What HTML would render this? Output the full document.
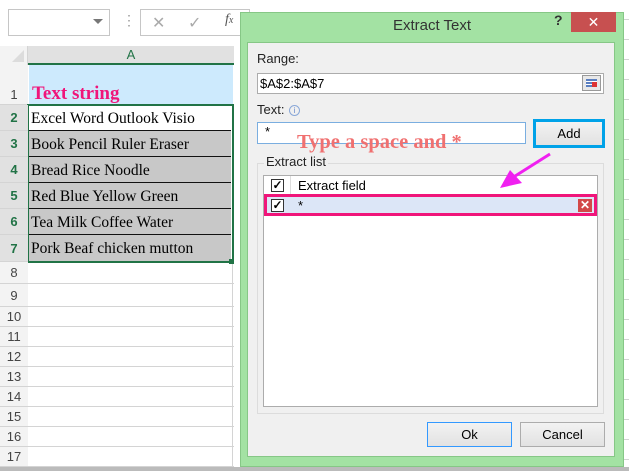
<!DOCTYPE html>
<html><head><style>
body{margin:0;width:629px;height:471px;overflow:hidden;background:#fff;position:relative;font-family:"Liberation Sans",sans-serif}
.a{position:absolute;box-sizing:border-box}
.serif{font-family:"Liberation Serif",serif}
.rn{position:absolute;left:0;width:28px;text-align:center;font-size:13px;color:#444;border-bottom:1px solid #d4d4d4;background:#f3f3f3;box-sizing:border-box}
.gl{position:absolute;left:28px;width:206px;border-bottom:1px solid #d4d4d4;box-sizing:border-box}
.cell{position:absolute;left:29px;width:202px;box-sizing:border-box;background:#c8c8c8;border-bottom:1.5px solid #111;font-family:"Liberation Serif",serif;font-size:15.5px;padding-left:2px;line-height:27px}
.btn{position:absolute;background:linear-gradient(#f2f2f2,#e2e2e2);border:1px solid #acacac;text-align:center;font-size:13px;box-sizing:border-box}
.cb{position:absolute;width:13px;height:13px;border:1px solid #333;background:#fff;box-sizing:border-box;font-size:12px;line-height:11px;text-align:center;font-weight:bold}
</style></head><body>
<div class="a" style="left:8px;top:9px;width:102px;height:27px;border:1px solid #c6c6c6"></div>
<div class="a" style="left:93px;top:19px;width:0;height:0;border-left:5px solid transparent;border-right:5px solid transparent;border-top:5px solid #777"></div>
<div class="a" style="left:122px;top:12px;color:#999;font-size:14px">⋮</div>
<div class="a" style="left:140px;top:9px;width:110px;height:27px;border:1px solid #c6c6c6"></div>
<div class="a" style="left:152px;top:13px;color:#aaa;font-size:16px">✕</div>
<div class="a" style="left:188px;top:13px;color:#aaa;font-size:16px">✓</div>
<div class="a serif" style="left:225px;top:12px;color:#555;font-size:14px;font-style:italic">f<span style="font-size:10px">x</span></div>
<div class="a" style="left:0;top:46px;width:28px;height:19px;background:#f3f3f3;border-right:1px solid #d4d4d4"></div>
<div class="a" style="left:12px;top:50px;width:0;height:0;border-left:12px solid transparent;border-bottom:12px solid #dcdcdc"></div>
<div class="a" style="left:28px;top:46px;width:206px;height:19px;background:#e1e1e1;border-bottom:2px solid #217346;text-align:center;font-size:13px;color:#217346;line-height:18px">A</div>
<div class="a" style="left:0;top:65px;width:28px;height:405px;background:#f3f3f3;border-right:1px solid #d4d4d4"></div>
<div class="a" style="left:232px;top:65px;width:1px;height:405px;background:#d4d4d4"></div>
<div class="a" style="left:29px;top:65px;width:204px;height:40px;background:#cdeafd"></div>
<div class="a serif" style="left:32px;top:83px;color:#f0157a;font-size:19px;font-weight:bold">Text string</div>
<div class="rn" style="top:65px;height:40px;padding-top:22px">1</div>
<div class="cell" style="top:105px;height:26px;background:#fff">Excel Word Outlook Visio</div>
<div class="cell" style="top:131px;height:26px">Book Pencil Ruler Eraser</div>
<div class="cell" style="top:157px;height:26px">Bread Rice Noodle</div>
<div class="cell" style="top:183px;height:26px">Red Blue Yellow Green</div>
<div class="cell" style="top:209px;height:26px">Tea Milk Coffee Water</div>
<div class="cell" style="top:235px;height:26px;border-bottom:none">Pork Beaf chicken mutton</div>
<div class="a" style="left:27px;top:104px;width:207px;height:159px;border:2px solid #217346"></div>
<div class="a" style="left:229px;top:259px;width:5px;height:5px;background:#217346"></div>
<div class="rn" style="top:105px;height:26px;line-height:26px;color:#217346;font-weight:bold;background:#e1e1e1">2</div>
<div class="rn" style="top:131px;height:26px;line-height:26px;color:#217346;font-weight:bold;background:#e1e1e1">3</div>
<div class="rn" style="top:157px;height:26px;line-height:26px;color:#217346;font-weight:bold;background:#e1e1e1">4</div>
<div class="rn" style="top:183px;height:26px;line-height:26px;color:#217346;font-weight:bold;background:#e1e1e1">5</div>
<div class="rn" style="top:209px;height:26px;line-height:26px;color:#217346;font-weight:bold;background:#e1e1e1">6</div>
<div class="rn" style="top:235px;height:27px;line-height:27px;color:#217346;font-weight:bold;background:#e1e1e1">7</div>
<div class="rn" style="top:262px;height:22px;line-height:22px">8</div><div class="gl" style="top:262px;height:22px"></div>
<div class="rn" style="top:284px;height:23px;line-height:23px">9</div><div class="gl" style="top:284px;height:23px"></div>
<div class="rn" style="top:307px;height:20px;line-height:20px">10</div><div class="gl" style="top:307px;height:20px"></div>
<div class="rn" style="top:327px;height:20px;line-height:20px">11</div><div class="gl" style="top:327px;height:20px"></div>
<div class="rn" style="top:347px;height:20px;line-height:20px">12</div><div class="gl" style="top:347px;height:20px"></div>
<div class="rn" style="top:367px;height:20px;line-height:20px">13</div><div class="gl" style="top:367px;height:20px"></div>
<div class="rn" style="top:387px;height:20px;line-height:20px">14</div><div class="gl" style="top:387px;height:20px"></div>
<div class="rn" style="top:407px;height:20px;line-height:20px">15</div><div class="gl" style="top:407px;height:20px"></div>
<div class="rn" style="top:427px;height:20px;line-height:20px">16</div><div class="gl" style="top:427px;height:20px"></div>
<div class="rn" style="top:447px;height:20px;line-height:20px">17</div><div class="gl" style="top:447px;height:20px"></div>
<div class="a" style="left:0;top:467px;width:629px;height:4px;background:#bbb"></div>
<div class="a" style="left:624px;top:0;width:5px;height:467px;background:repeating-linear-gradient(#fff 0 19px,#d4d4d4 19px 20px)"></div>
<div class="a" style="left:240px;top:12px;width:384px;height:455px;background:#a3e2a3;border:1px solid #86c786"></div>
<div class="a" style="left:240px;top:17px;width:384px;text-align:center;font-size:15px;color:#333">Extract Text</div>
<div class="a" style="left:554px;top:12px;font-size:14px;font-weight:bold;color:#333">?</div>
<div class="a" style="left:571px;top:12px;width:45px;height:20px;background:#c75050;color:#fff;text-align:center;font-size:14px;line-height:20px">✕</div>
<div class="a" style="left:247px;top:42px;width:368px;height:415px;background:#f0f0f0;border:1px solid #86c786"></div>
<div class="a" style="left:257px;top:51px;font-size:13px;color:#222">Range:</div>
<div class="a" style="left:257px;top:73px;width:347px;height:21px;background:#fff;border:1px solid #acacac;font-size:13px;line-height:19px;padding-left:2px">$A$2:$A$7</div>
<div class="a" style="left:582px;top:75px;width:19px;height:16px;border:1px solid #999;background:#e8e8e8"><div class="a" style="left:3px;top:3px;width:11px;height:8px;background:repeating-linear-gradient(#5b7fc0 0 2px,#fff 2px 3px)"></div><div class="a" style="left:9px;top:6px;width:5px;height:5px;background:#d33"></div></div>
<div class="a" style="left:257px;top:102px;font-size:13px;color:#222">Text:</div>
<div class="a" style="left:289px;top:105px;width:11px;height:11px;border:1px solid #8aa8d8;border-radius:50%;font-size:8px;color:#6688cc;text-align:center;line-height:10px">i</div>
<div class="a" style="left:257px;top:122px;width:269px;height:22px;background:#fff;border:1px solid #7aaee0;font-size:13px;padding-left:7px;line-height:18px">*</div>
<div class="btn" style="left:533px;top:119px;width:72px;height:29px;border:3px solid #00a2e8;line-height:23px">Add</div>
<div class="a serif" style="left:297px;top:131px;font-size:20.5px;font-weight:bold;color:#f07070">Type a space and *</div>
<div class="a" style="left:257px;top:163px;width:347px;height:251px;border:1px solid #dcdcdc"></div>
<div class="a" style="left:264px;top:154px;font-size:13px;color:#222;background:#f0f0f0;padding:0 2px">Extract list</div>
<div class="a" style="left:263px;top:175px;width:335px;height:232px;background:#fff;border:1px solid #acacac"></div>
<div class="a" style="left:290px;top:176px;width:1px;height:40px;background:#ddd"></div>
<div class="cb" style="left:271px;top:179px">✓</div>
<div class="a" style="left:298px;top:178px;font-size:13px">Extract field</div>
<div class="a" style="left:264px;top:194px;width:333px;height:22px;background:#dce6f7;border:3px solid #f0157a"></div>
<div class="cb" style="left:271px;top:199px">✓</div>
<div class="a" style="left:298px;top:198px;font-size:13px">*</div>
<div class="a" style="left:578px;top:199px;width:14px;height:13px;background:#d24848;color:#fff;font-size:12px;line-height:13px;text-align:center;font-weight:bold">✕</div>
<svg class="a" style="left:490px;top:150px" width="70" height="45"><path d="M60 4 L22 28" stroke="#f020f0" stroke-width="3"/><path d="M10 38 L20 20 L32 33 Z" fill="#f020f0"/></svg>
<div class="btn" style="left:427px;top:422px;width:85px;height:25px;border-color:#3399ff;line-height:23px">Ok</div>
<div class="btn" style="left:520px;top:422px;width:85px;height:25px;line-height:23px">Cancel</div>
</body></html>
